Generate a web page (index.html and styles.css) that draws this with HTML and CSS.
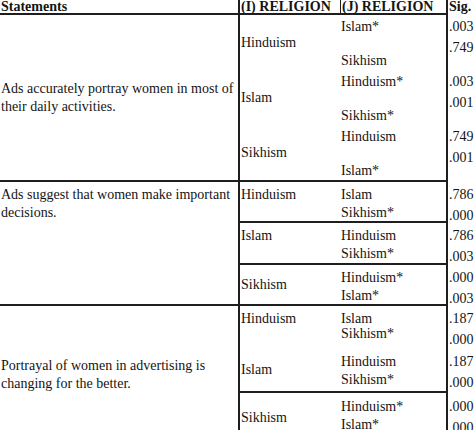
FILE: index.html
```html
<!DOCTYPE html>
<html>
<head>
<meta charset="utf-8">
<link rel="stylesheet" href="styles.css">
</head>
<body>
<div class="table">
  <div class="head">
    <div class="h h-stmt">Statements</div>
    <div class="h h-i">(I) RELIGION</div>
    <div class="h h-j">(J) RELIGION</div>
    <div class="h-sig">Sig.</div>
  </div>

  <div class="group g1">
    <div class="stmt mid">Ads accurately portray women in most of their daily activities.</div>
    <div class="ij r1"><div class="ci mid">Hinduism</div><div class="cj split"><span>Islam*</span><span>Sikhism</span></div></div>
    <div class="sig r1"><span>.003</span><span>.749</span></div>
    <div class="ij r2"><div class="ci mid">Islam</div><div class="cj split"><span>Hinduism*</span><span>Sikhism*</span></div></div>
    <div class="sig r2"><span>.003</span><span>.001</span></div>
    <div class="ij r3 last"><div class="ci mid">Sikhism</div><div class="cj split"><span>Hinduism</span><span>Islam*</span></div></div>
    <div class="sig r3"><span>.749</span><span>.001</span></div>
  </div>

  <div class="group g2">
    <div class="stmt top">Ads suggest that women make important decisions.</div>
    <div class="ij r1 line"><div class="ci top">Hinduism</div><div class="cj top"><span>Islam</span><span>Sikhism*</span></div></div>
    <div class="sig r1"><span>.786</span><span>.000</span></div>
    <div class="ij r2 line"><div class="ci top">Islam</div><div class="cj top"><span>Hinduism</span><span>Sikhism*</span></div></div>
    <div class="sig r2"><span>.786</span><span>.003</span></div>
    <div class="ij r3 last"><div class="ci mid">Sikhism</div><div class="cj top"><span>Hinduism*</span><span>Islam*</span></div></div>
    <div class="sig r3"><span>.000</span><span>.003</span></div>
  </div>

  <div class="group g3">
    <div class="stmt mid">Portrayal of women in advertising is changing for the better.</div>
    <div class="ij r1"><div class="ci top">Hinduism</div><div class="cj top tight"><span>Islam</span><span>Sikhism*</span></div></div>
    <div class="sig r1"><span>.187</span><span>.000</span></div>
    <div class="ij r2 line"><div class="ci mid">Islam</div><div class="cj top"><span>Hinduism</span><span>Sikhism*</span></div></div>
    <div class="sig r2"><span>.187</span><span>.000</span></div>
    <div class="ij r3 last"><div class="ci mid">Sikhism</div><div class="cj top low"><span>Hinduism*</span><span>Islam*</span></div></div>
    <div class="sig r3 low"><span>.000</span><span>.000</span></div>
  </div>
</div>
</body>
</html>
```

FILE: styles.css
```css
html, body {
  margin: 0;
  padding: 0;
  background: #ffffff;
}

body {
  font-family: "Liberation Serif", "Times New Roman", serif;
  font-size: 14px;
  line-height: 18px;
  color: #141414;
  overflow: hidden;
  width: 474px;
  height: 430px;
}

.table {
  width: 474px;
  overflow: hidden;
}

/* header */
.head {
  display: grid;
  grid-template-columns: 238px 103px 107px 1fr;
  height: 15px;
  line-height: 13px;
  font-weight: bold;
  white-space: nowrap;
}

.h {
  box-sizing: border-box;
  border-bottom: 2px solid #1e1e1e;
}

.h-stmt {
  padding-left: 1px;
}

.h-i {
  border-left: 2px solid #1e1e1e;
  border-right: 1px solid #1e1e1e;
  padding-left: 1px;
}

.h-j {
  border-right: 2px solid #1e1e1e;
  padding-left: 1px;
}

.h-sig {
  padding-left: 1px;
}

/* groups */
.group {
  display: grid;
  grid-template-columns: 238px 210px 1fr;
}

.g1 { grid-template-rows: 55px 55px 57px; }
.g2 { grid-template-rows: 41px 42px 41px; }
.g3 { grid-template-rows: 43px 44px 52px; }

.stmt {
  grid-column: 1;
  grid-row: 1 / -1;
  box-sizing: border-box;
  border-bottom: 2px solid #1e1e1e;
  padding-left: 1px;
  display: flex;
  flex-direction: column;
}

.stmt.mid { justify-content: center; }
.stmt.top { padding-top: 4px; }

.ij {
  grid-column: 2;
  box-sizing: border-box;
  border-left: 2px solid #1e1e1e;
  border-right: 2px solid #1e1e1e;
  display: flex;
}

.ij.line, .ij.last {
  border-bottom: 2px solid #1e1e1e;
}

.r1 { grid-row: 1; }
.r2 { grid-row: 2; }
.r3 { grid-row: 3; }

.ci {
  width: 101px;
  padding-left: 1px;
  box-sizing: border-box;
  display: flex;
  flex-direction: column;
  white-space: nowrap;
}

.ci.mid { justify-content: center; }
.ci.top { padding-top: 4px; }

.cj {
  flex: 1;
  display: flex;
  flex-direction: column;
  white-space: nowrap;
}

.cj.split {
  justify-content: space-between;
  padding-top: 3px;
}

.cj.top { padding-top: 4px; }
.cj.tight { line-height: 15px; padding-top: 5px; }
.cj.low { padding-top: 5px; }

.sig {
  grid-column: 3;
  padding-left: 1px;
  padding-top: 2px;
  line-height: 21px;
  display: flex;
  flex-direction: column;
  white-space: nowrap;
}

.g1 .sig { padding-top: 1px; }
.sig.low { padding-top: 3px; }
```
